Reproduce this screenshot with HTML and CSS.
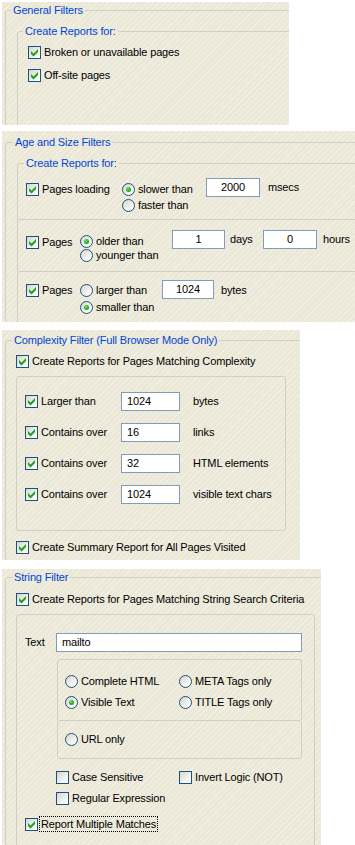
FILE: index.html
```html
<!DOCTYPE html>
<html>
<head>
<meta charset="utf-8">
<link rel="stylesheet" href="styles.css">
</head>
<body>
<div class="page">

  <section class="panel p1">
    <fieldset class="grp g1">
      <legend>General Filters</legend>
      <fieldset class="sub s1">
        <legend>Create Reports for:</legend>
        <div class="stack gap10">
          <div class="ck"><span class="cb"><svg viewBox="0 0 11 11"><path d="M2 4 4.5 6.5 9 2 9 5 4.5 9.5 2 7Z"/></svg></span>Broken or unavailable pages</div>
          <div class="ck"><span class="cb"><svg viewBox="0 0 11 11"><path d="M2 4 4.5 6.5 9 2 9 5 4.5 9.5 2 7Z"/></svg></span>Off-site pages</div>
        </div>
      </fieldset>
    </fieldset>
  </section>

  <section class="panel p2">
    <fieldset class="grp g2">
      <legend>Age and Size Filters</legend>
      <fieldset class="sec sec-a">
        <legend>Create Reports for:</legend>
        <div class="row">
          <div class="ck col-load"><span class="cb"><svg viewBox="0 0 11 11"><path d="M2 4 4.5 6.5 9 2 9 5 4.5 9.5 2 7Z"/></svg></span>Pages loading</div>
          <div class="rg rg-speed">
            <div class="ro"><span class="rb on"></span>slower than</div>
            <div class="ro"><span class="rb"></span>faster than</div>
          </div>
          <span class="tb center tb-ms">2000</span>
          <span class="unit unit-ms">msecs</span>
        </div>
      </fieldset>
      <div class="sec sec-b">
        <div class="row">
          <div class="ck col-pages ck-age"><span class="cb"><svg viewBox="0 0 11 11"><path d="M2 4 4.5 6.5 9 2 9 5 4.5 9.5 2 7Z"/></svg></span>Pages</div>
          <div class="rg rg-age">
            <div class="ro"><span class="rb on"></span>older than</div>
            <div class="ro"><span class="rb"></span>younger than</div>
          </div>
          <span class="tb center tb-days">1</span>
          <span class="unit unit-days">days</span>
          <span class="tb center tb-hours">0</span>
          <span class="unit unit-hours">hours</span>
        </div>
      </div>
      <div class="sec sec-c">
        <div class="row">
          <div class="ck col-pages ck-size"><span class="cb"><svg viewBox="0 0 11 11"><path d="M2 4 4.5 6.5 9 2 9 5 4.5 9.5 2 7Z"/></svg></span>Pages</div>
          <div class="rg rg-size">
            <div class="ro"><span class="rb"></span>larger than</div>
            <div class="ro"><span class="rb on"></span>smaller than</div>
          </div>
          <span class="tb center tb-bytes">1024</span>
          <span class="unit unit-bytes">bytes</span>
        </div>
      </div>
    </fieldset>
  </section>

  <section class="panel p3">
    <fieldset class="grp g3">
      <legend>Complexity Filter (Full Browser Mode Only)</legend>
      <div class="ck"><span class="cb"><svg viewBox="0 0 11 11"><path d="M2 4 4.5 6.5 9 2 9 5 4.5 9.5 2 7Z"/></svg></span>Create Reports for Pages Matching Complexity</div>
      <div class="box cx-box">
        <div class="cx-row">
          <div class="ck cx-label"><span class="cb"><svg viewBox="0 0 11 11"><path d="M2 4 4.5 6.5 9 2 9 5 4.5 9.5 2 7Z"/></svg></span>Larger than</div>
          <span class="tb cx-tb">1024</span>
          <span class="cx-unit">bytes</span>
        </div>
        <div class="cx-row">
          <div class="ck cx-label"><span class="cb"><svg viewBox="0 0 11 11"><path d="M2 4 4.5 6.5 9 2 9 5 4.5 9.5 2 7Z"/></svg></span>Contains over</div>
          <span class="tb cx-tb">16</span>
          <span class="cx-unit">links</span>
        </div>
        <div class="cx-row">
          <div class="ck cx-label"><span class="cb"><svg viewBox="0 0 11 11"><path d="M2 4 4.5 6.5 9 2 9 5 4.5 9.5 2 7Z"/></svg></span>Contains over</div>
          <span class="tb cx-tb">32</span>
          <span class="cx-unit">HTML elements</span>
        </div>
        <div class="cx-row">
          <div class="ck cx-label"><span class="cb"><svg viewBox="0 0 11 11"><path d="M2 4 4.5 6.5 9 2 9 5 4.5 9.5 2 7Z"/></svg></span>Contains over</div>
          <span class="tb cx-tb">1024</span>
          <span class="cx-unit">visible text chars</span>
        </div>
      </div>
      <div class="ck summary"><span class="cb"><svg viewBox="0 0 11 11"><path d="M2 4 4.5 6.5 9 2 9 5 4.5 9.5 2 7Z"/></svg></span>Create Summary Report for All Pages Visited</div>
    </fieldset>
  </section>

  <section class="panel p4">
    <fieldset class="grp g4">
      <legend>String Filter</legend>
      <div class="ck"><span class="cb"><svg viewBox="0 0 11 11"><path d="M2 4 4.5 6.5 9 2 9 5 4.5 9.5 2 7Z"/></svg></span>Create Reports for Pages Matching String Search Criteria</div>
      <div class="box str-box">
        <div class="text-row">
          <span class="text-label">Text</span>
          <span class="tb str-tb">mailto</span>
        </div>
        <div class="radio-box">
          <div class="rb-upper">
            <div class="ro-grid">
              <div class="ro"><span class="rb"></span>Complete HTML</div>
              <div class="ro"><span class="rb"></span>META Tags only</div>
              <div class="ro"><span class="rb on"></span>Visible Text</div>
              <div class="ro"><span class="rb"></span>TITLE Tags only</div>
            </div>
          </div>
          <div class="rb-lower">
            <div class="ro"><span class="rb"></span>URL only</div>
          </div>
        </div>
        <div class="opt-grid">
          <div class="ck"><span class="cb"></span>Case Sensitive</div>
          <div class="ck"><span class="cb"></span>Invert Logic (NOT)</div>
          <div class="ck"><span class="cb"></span>Regular Expression</div>
        </div>
        <div class="ck multi"><span class="cb"><svg viewBox="0 0 11 11"><path d="M2 4 4.5 6.5 9 2 9 5 4.5 9.5 2 7Z"/></svg></span><span class="focus">Report Multiple Matches</span></div>
      </div>
    </fieldset>
  </section>

</div>
</body>
</html>
```

FILE: styles.css
```css
* { box-sizing: border-box; }

body {
  margin: 0;
  background: #ffffff;
  color: #000000;
  font-family: "Liberation Sans", Arial, sans-serif;
  font-size: 11px;
  line-height: 13px;
  letter-spacing: -0.15px;
}

.page {
  display: flex;
  flex-direction: column;
  align-items: flex-start;
  padding-top: 2px;
}

.panel {
  margin-left: 2px;
  overflow: hidden;
  background-color: #ebe8d7;
  background-image: repeating-linear-gradient(135deg, rgba(255,255,255,0) 0 3px, rgba(255,255,255,0.35) 3px 4px);
}
.p1 { width: 287px; height: 123px; }
.p2 { width: 353px; height: 191px; margin-top: 6px; }
.p3 { width: 298px; height: 230px; margin-top: 8px; }
.p4 { width: 319px; height: 276px; margin-top: 9px; }

fieldset {
  margin: 0;
  min-width: 0;
  padding: 0;
  border: 1px solid #d0d0bf;
  border-radius: 3px;
}
legend {
  padding: 0 2px;
  color: #0046d5;
  line-height: 13px;
  white-space: nowrap;
}

/* outer group boxes */
.grp { margin: 0 -40px 0 3px; padding: 8px 0 60px 11px; }
.g1 { margin-top: 2px; }
.g1 > legend { margin-left: -6px; }
.g2 { margin-top: 5px; }
.g2 > legend { margin-left: -4px; }
.g3 { margin-top: 4px; padding-left: 10px; }
.g3 > legend { margin-left: -4px; }
.g4 { margin-top: 2px; padding-left: 10px; padding-top: 9px; }
.g4 > legend { margin-left: -4px; }

.sub { padding: 8px 0 60px 10px; }
.s1 > legend { margin-left: -5px; }

.stack { display: flex; flex-direction: column; }
.gap10 { gap: 10px; }

/* checkbox */
.ck {
  display: flex;
  align-items: center;
  gap: 3px;
  white-space: nowrap;
  height: 13px;
}
.cb {
  flex: none;
  width: 13px;
  height: 13px;
  border: 1px solid #1c5180;
  background: linear-gradient(135deg, #d6d5cc 0%, #f2f2ee 60%, #ffffff 100%);
  display: flex;
}
.cb svg { width: 11px; height: 11px; }
.cb path { fill: #21a121; }

/* radio */
.ro {
  display: flex;
  align-items: center;
  gap: 3px;
  white-space: nowrap;
}
.rb {
  flex: none;
  width: 13px;
  height: 13px;
  border: 1px solid #1c5180;
  border-radius: 50%;
  background: linear-gradient(135deg, #d6d5cc 0%, #f2f2ee 60%, #ffffff 100%);
  display: flex;
  align-items: center;
  justify-content: center;
}
.rb.on::after {
  content: "";
  width: 5px;
  height: 5px;
  border-radius: 50%;
  background: radial-gradient(circle at 40% 35%, #7fe27f 0, #2fb12f 45%, #1e911e 100%);
}

/* text boxes */
.tb {
  flex: none;
  height: 19px;
  border: 1px solid #7f9db9;
  background: #ffffff;
  display: flex;
  align-items: center;
  white-space: nowrap;
}
.tb.center { justify-content: center; }

/* age & size sections */
.sec {
  border: 1px solid #d0d0bf;
  border-bottom: none;
  border-radius: 3px 3px 0 0;
}
.sec-a { padding: 8px 0 6px 8px; }
.sec-a > legend { margin-left: -2px; }
.sec-b { height: 52px; padding: 10px 0 0 8px; }
.sec-c { height: 80px; padding: 8px 0 0 8px; }

.row { display: flex; align-items: flex-start; }
.rg { display: flex; flex-direction: column; flex: none; }
.unit { white-space: nowrap; }

.col-load { width: 96px; margin-top: 5px; flex: none; }
.rg-speed { width: 84px; margin-top: 3px; }
.rg-speed .ro { height: 16px; }
.tb-ms { width: 54px; }
.unit-ms { margin: 3px 0 0 8px; }

.col-pages { width: 54px; flex: none; }
.ck-age { margin-top: 6px; }
.rg-age { width: 92px; margin-top: 4px; }
.rg-age .ro { height: 14px; }
.tb-days { width: 53px; }
.unit-days { width: 38px; padding-left: 5px; margin-top: 3px; }
.tb-hours { width: 54px; }
.unit-hours { margin: 3px 0 0 6px; }

.ck-size { margin-top: 4px; }
.rg-size { width: 82px; margin-top: 2px; }
.rg-size .ro { height: 17px; }
.tb-bytes { width: 52px; }
.unit-bytes { margin: 4px 0 0 7px; }

/* complexity */
.box {
  border: 1px solid #d0d0bf;
  border-radius: 3px;
}
.cx-box {
  width: 270px;
  height: 155px;
  margin-top: 8px;
  padding: 15px 0 0 8px;
  display: flex;
  flex-direction: column;
  gap: 12px;
}
.cx-row { display: flex; align-items: center; height: 19px; }
.cx-label { width: 96px; flex: none; }
.cx-tb { width: 59px; padding-left: 5px; }
.cx-unit { margin-left: 13px; white-space: nowrap; }
.summary { margin-top: 10px; }

/* string filter */
.str-box {
  width: 299px;
  height: 300px;
  margin-top: 8px;
  padding: 18px 0 0 8px;
}
.text-row { display: flex; align-items: center; height: 19px; }
.text-label { width: 31px; flex: none; }
.str-tb { width: 246px; padding-left: 5px; }

.radio-box { width: 245px; margin: 7px 0 0 32px; }
.rb-upper {
  height: 61px;
  border: 1px solid #d0d0bf;
  border-bottom: none;
  border-radius: 3px 3px 0 0;
  padding: 15px 0 0 7px;
}
.ro-grid {
  display: grid;
  grid-template-columns: 114px auto;
  row-gap: 8px;
}
.ro-grid .ro { height: 13px; }
.rb-lower {
  height: 39px;
  border: 1px solid #d0d0bf;
  border-radius: 3px;
  padding: 12px 0 0 7px;
}
.rb-lower .ro { height: 13px; }

.opt-grid {
  display: grid;
  grid-template-columns: 123px auto;
  row-gap: 8px;
  margin: 12px 0 0 31px;
}

.multi { margin-top: 11px; height: 16px; gap: 1px; }
.focus {
  border: 1px dotted #000000;
  padding: 0 1px;
  line-height: 14px;
}
```
